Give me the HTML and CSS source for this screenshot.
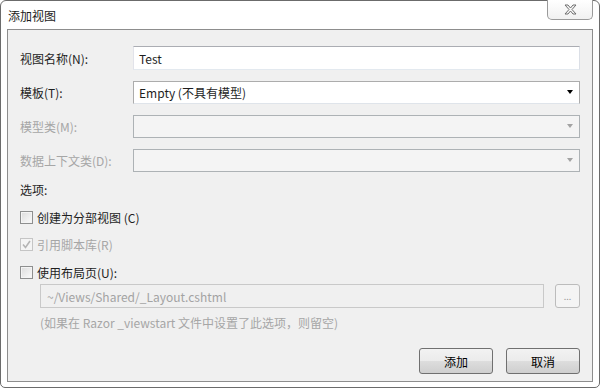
FILE: index.html
```html
<!DOCTYPE html>
<html>
<head>
  <meta charset="utf-8">
  <title>添加视图</title>
  <link rel="stylesheet" href="styles.css">
</head>
<body>

  <div class="window">
    <div class="title-bar">
      <span class="title">添加视图</span>
      <div class="close-btn">
        <svg width="13" height="11" viewBox="0 0 13 11">
          <polygon points="1,1 4,1 6.5,4 9,1 12,1 8,5.5 12,10 9,10 6.5,7 4,10 1,10 5,5.5" fill="#f6f6f6" stroke="#6f6f6f" stroke-width="1" stroke-linejoin="round"/>
        </svg>
      </div>
    </div>

    <div class="panel">
      <div class="form-row">
        <label class="label">视图名称(N):</label>
        <div class="text-input">Test</div>
      </div>

      <div class="form-row">
        <label class="label">模板(T):</label>
        <div class="select">
          <span>Empty (不具有模型)</span>
          <span class="arrow"></span>
        </div>
      </div>

      <div class="form-row">
        <label class="label disabled">模型类(M):</label>
        <div class="select is-disabled">
          <span></span>
          <span class="arrow"></span>
        </div>
      </div>

      <div class="form-row">
        <label class="label disabled">数据上下文类(D):</label>
        <div class="select is-disabled">
          <span></span>
          <span class="arrow"></span>
        </div>
      </div>

      <div class="section-title">选项:</div>

      <div class="check-row">
        <span class="checkbox"></span>
        <span>创建为分部视图 (C)</span>
      </div>

      <div class="check-row disabled">
        <span class="checkbox checked">
          <svg width="11" height="11" viewBox="0 0 11 11">
            <polyline points="2,5.5 4.5,8.5 9,2" fill="none" stroke="#b4b4b4" stroke-width="1.6"/>
          </svg>
        </span>
        <span>引用脚本库(R)</span>
      </div>

      <div class="check-row last">
        <span class="checkbox"></span>
        <span>使用布局页(U):</span>
      </div>

      <div class="layout-row">
        <div class="layout-input">~/Views/Shared/_Layout.cshtml</div>
        <div class="browse-btn">...</div>
      </div>

      <div class="hint">(如果在 Razor _viewstart 文件中设置了此选项，则留空)</div>

      <div class="button-row">
        <div class="btn">添加</div>
        <div class="btn">取消</div>
      </div>
    </div>
  </div>

</body>
</html>
```

FILE: styles.css
```css
body {
  margin: 0;
  background-color: #ffffff;
  font-family: "Noto Sans CJK SC", "Noto Sans", sans-serif;
  font-size: 12px;
  color: #1e1e1e;
}

.window {
  box-sizing: border-box;
  width: 600px;
  height: 388px;
  border: 1px solid #6b6b6b;
  border-radius: 6px 6px 5px 5px;
  background-color: #ffffff;
  display: flex;
  flex-direction: column;
}

.title-bar {
  height: 28px;
  display: flex;
  align-items: flex-start;
  padding-left: 7px;
  padding-right: 6px;
}

.title {
  margin-top: 7px;
  line-height: 16px;
  color: #1a1a1a;
}

.close-btn {
  margin-left: auto;
  margin-top: -1px;
  box-sizing: border-box;
  width: 46px;
  height: 20px;
  border: 1px solid #9a9a9a;
  border-top: none;
  border-radius: 0 0 5px 5px;
  background: linear-gradient(#ffffff, #f1f1f1);
  display: flex;
  align-items: center;
  justify-content: center;
}

.panel {
  box-sizing: border-box;
  margin: 0 6px 0 6px;
  height: 353px;
  border: 1px solid #8d8d8d;
  background-color: #f0f0f0;
  padding: 16px 12px 0 12px;
  display: flex;
  flex-direction: column;
}

.form-row {
  display: flex;
  align-items: center;
  height: 24px;
  margin-bottom: 10px;
}

.label {
  width: 113px;
  flex-shrink: 0;
}

.label.disabled {
  color: #a6a6a6;
}

.text-input,
.select {
  box-sizing: border-box;
  flex: 1;
  height: 24px;
  background-color: #ffffff;
  border: 1px solid #abadb3;
  border-left-color: #e2e3ea;
  border-right-color: #dbdfe6;
  border-bottom-color: #e3e9ef;
  padding: 0 5px;
  display: flex;
  align-items: center;
}

.select {
  height: 23px;
  justify-content: space-between;
  padding-right: 6px;
  border-color: #acacac;
  border-bottom-color: #dfe4ea;
}

.arrow {
  width: 0;
  height: 0;
  border-left: 3.5px solid transparent;
  border-right: 3.5px solid transparent;
  border-top: 4px solid #000000;
}

.select.is-disabled {
  background-color: #f4f4f4;
  border-color: #adb2b5;
}

.select.is-disabled .arrow {
  border-top-color: #a3a3a3;
}

.section-title {
  line-height: 16px;
}

.check-row {
  display: flex;
  align-items: center;
  gap: 4px;
  height: 16px;
  margin-top: 11px;
}

.check-row.last {
  margin-top: 12px;
}

.check-row.disabled {
  color: #a6a6a6;
}

.checkbox {
  box-sizing: border-box;
  width: 13px;
  height: 13px;
  border: 1px solid #8e8f8f;
  background: linear-gradient(135deg, #dcdcdc, #fbfbfb);
  box-shadow: inset 0 0 0 1px #f4f4f4;
  display: flex;
  align-items: center;
  justify-content: center;
}

.checkbox.checked {
  border-color: #c5c5c5;
  background: #f4f4f4;
  box-shadow: none;
}

.layout-row {
  display: flex;
  gap: 11px;
  margin-top: 4px;
  padding-left: 20px;
}

.layout-input {
  box-sizing: border-box;
  flex: 1;
  height: 24px;
  border: 1px solid #c9c9c9;
  background-color: #f0f0f0;
  color: #a3a3a3;
  padding: 0 6px;
  display: flex;
  align-items: center;
}

.browse-btn {
  box-sizing: border-box;
  width: 25px;
  height: 24px;
  border: 1px solid #bcbcbc;
  border-radius: 3px;
  background-color: #f4f4f4;
  color: #9a9a9a;
  font-size: 9px;
  display: flex;
  align-items: center;
  justify-content: center;
}

.hint {
  margin-top: 6px;
  padding-left: 20px;
  line-height: 18px;
  color: #a6a6a6;
}

.button-row {
  display: flex;
  justify-content: flex-end;
  gap: 13px;
  margin-top: 16px;
}

.btn {
  box-sizing: border-box;
  width: 74px;
  height: 26px;
  border: 1px solid #707070;
  border-radius: 3px;
  background: linear-gradient(#f2f2f2 0%, #ebebeb 50%, #dddddd 51%, #cfcfcf 100%);
  color: #000000;
  display: flex;
  align-items: center;
  justify-content: center;
}
```
